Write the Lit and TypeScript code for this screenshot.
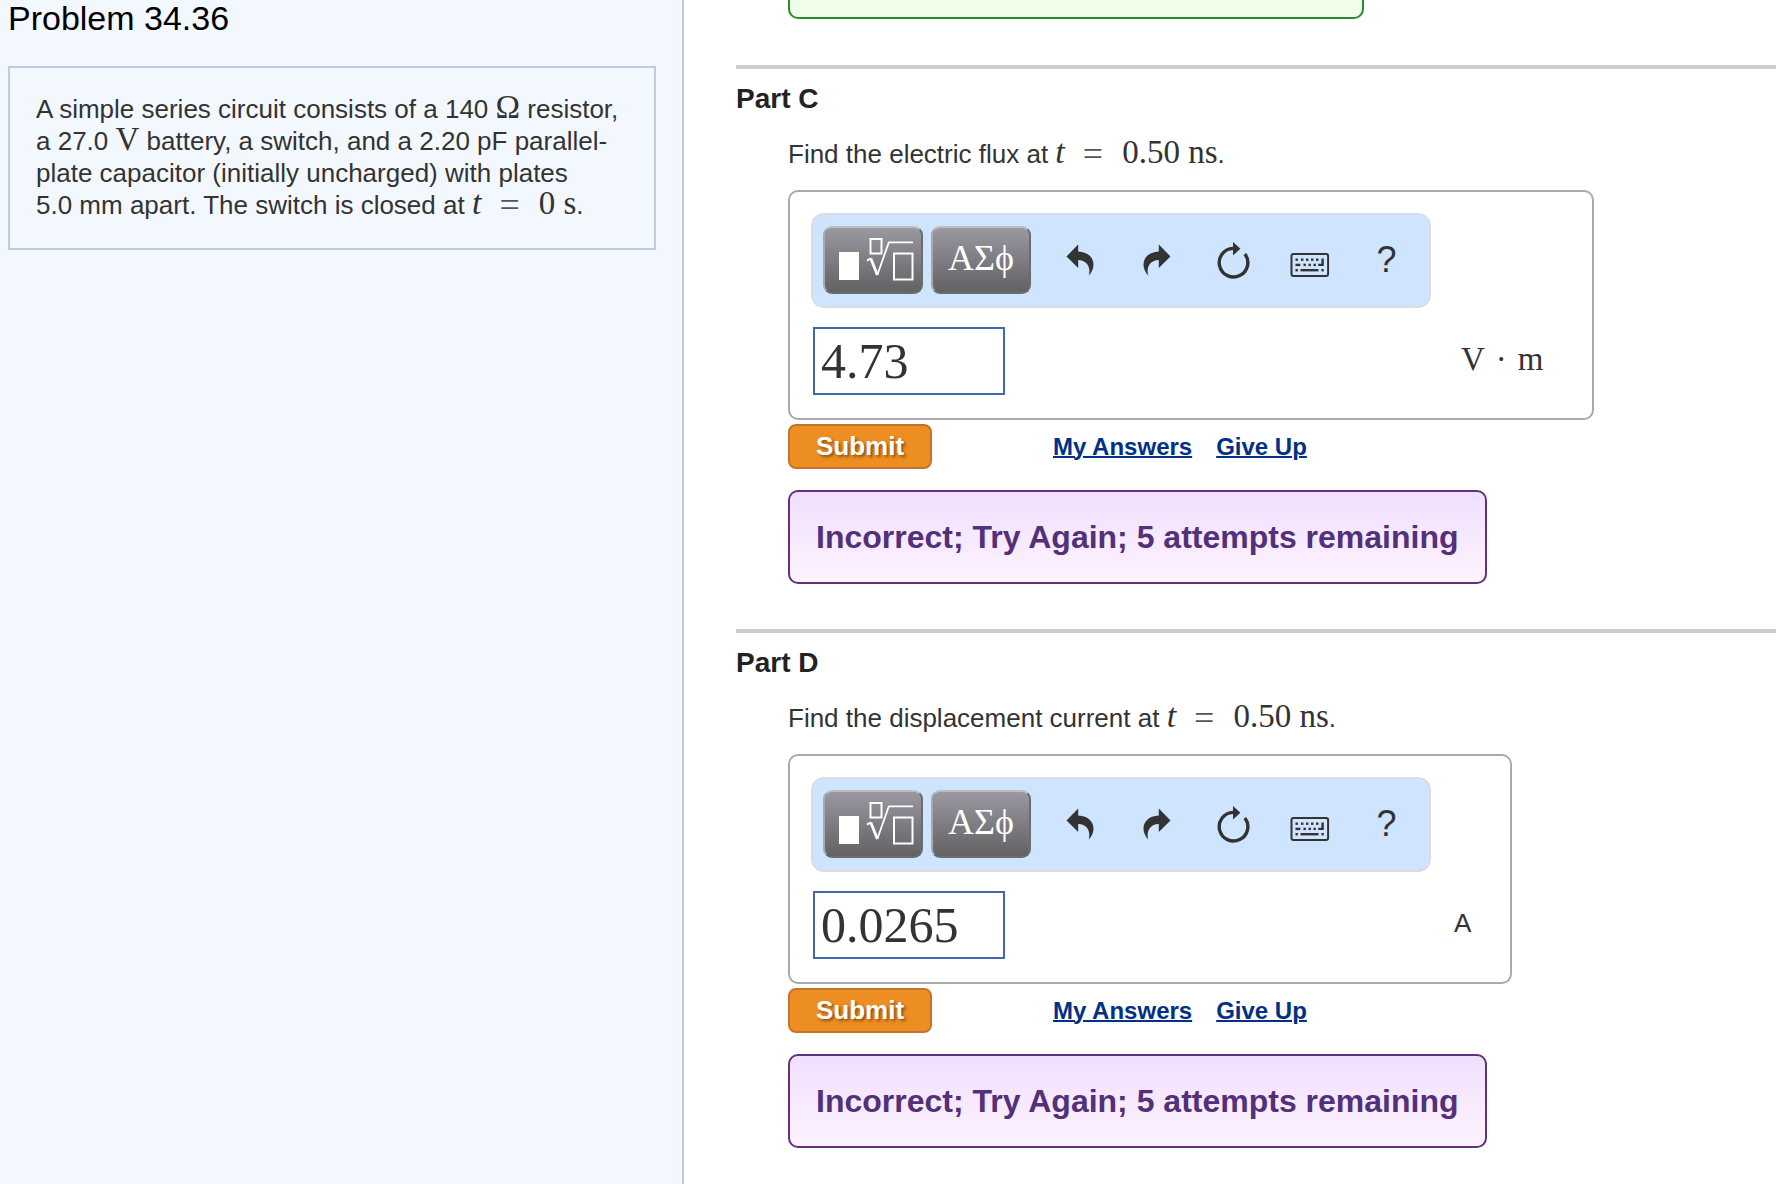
import { LitElement, html, css, svg, nothing } from "lit";
import { customElement, property } from "lit/decorators.js";

const sharedMath = css`
  .math {
    font-family: "Liberation Serif", "Times New Roman", serif;
    font-size: 33px;
    line-height: 24px;
    white-space: nowrap;
  }
  .var {
    font-size: 34px;
    font-style: italic;
  }
  .rel {
    margin: 0 19px 0 18px;
    color: #555;
    font-size: 36px;
    line-height: 0;
    vertical-align: -3px;
  }
`;

const equation = (value: string, unit: string) => html`<span class="math"
  ><span class="var">t</span><span class="rel">=</span>${value}&nbsp;${unit}</span
>`;

const rootIcon = svg`
  <rect x="14" y="24" width="20" height="28" fill="#fff" />
  <g fill="none" stroke="#fff" stroke-width="2">
    <rect x="45.5" y="11" width="11" height="14.5" />
    <rect x="69" y="25.5" width="18.5" height="26" />
    <path d="M42 32.6 45.8 30.4" />
    <path d="M52.3 47 63.8 14.4H88" stroke-width="1.8" />
    <path d="M45.8 30.4 52.4 47" stroke-width="2.8" />
  </g>`;

const undoPath =
  "M7.5 16.5 19.2 4.5V11.5C29.5 12 34.5 18 34.5 24.5 34.5 29 32.5 32.5 29.8 35.5 32 27.5 28 20 19.2 20V28Z";

const icons = {
  undo: svg`<path fill="#333" d=${undoPath} />`,
  redo: svg`<path fill="#333" transform="matrix(-1 0 0 1 42 0)" d=${undoPath} />`,
  reset: svg`
    <path fill="none" stroke="#333" stroke-width="3.4" d="M31.9 14A14.3 14.3 0 1 1 20 8.4" />
    <path fill="#333" d="M20 2 27.4 8.8 20 15.4Z" />`,
  keyboard: svg`
    <rect x="1.5" y="14" width="36.6" height="22" rx="2" fill="none" stroke="#333" stroke-width="2" />
    <g fill="#333">
      <rect x="5.5" y="18.5" width="2.4" height="2.4" />
      <rect x="11" y="18.5" width="2.4" height="2.4" />
      <rect x="16" y="18.5" width="2.4" height="2.4" />
      <rect x="21" y="18.5" width="2.4" height="2.4" />
      <rect x="26" y="18.5" width="2.4" height="2.4" />
      <path d="M31.4 18.5H33.8V26.1H28.2V23.7H31.4Z" />
      <rect x="5.5" y="23.7" width="4.8" height="2.4" />
      <rect x="13.5" y="23.7" width="2.4" height="2.4" />
      <rect x="18.5" y="23.7" width="2.4" height="2.4" />
      <rect x="23.5" y="23.7" width="2.4" height="2.4" />
      <rect x="5.5" y="29" width="2.4" height="2.4" />
      <rect x="10.5" y="29" width="18" height="2.4" />
      <rect x="31.4" y="29" width="2.4" height="2.4" />
    </g>`,
};

@customElement("math-toolbar")
class MathToolbar extends LitElement {
  static styles = css`
    :host {
      display: block;
    }
    .bar {
      display: flex;
      align-items: center;
      padding: 11px 4px 12px 10px;
      border: 2px solid #dadce3;
      border-radius: 13px;
      background: #cfe5ff;
    }
    .palettes {
      display: flex;
      gap: 8px;
      margin-right: 9px;
    }
    button {
      font: inherit;
      margin: 0;
      padding: 0;
      cursor: pointer;
    }
    .palette {
      display: flex;
      align-items: flex-start;
      justify-content: center;
      width: 100px;
      height: 68px;
      border: 2px solid;
      border-color: #bdbdbf #6c6c6e #6c6c6e #a9a9ab;
      border-radius: 9px;
      background: linear-gradient(#9a98a2, #626163);
      color: #fff;
      font-family: "Liberation Serif", serif;
      font-size: 36px;
      line-height: 60px;
    }
    .root {
      width: 96px;
      height: 64px;
    }
    .tool {
      display: flex;
      align-items: center;
      justify-content: center;
      width: 77px;
      height: 68px;
      border: 0;
      background: none;
      color: #333;
      font-family: "Liberation Sans", Arial, sans-serif;
      font-size: 36px;
    }
    .glyph {
      width: 40px;
      height: 40px;
    }
  `;

  private tool(name: keyof typeof icons, label: string) {
    return html`<button class="tool" type="button" aria-label=${label}>
      <svg class="glyph" viewBox="0 0 40 40" aria-hidden="true">${icons[name]}</svg>
    </button>`;
  }

  render() {
    return html`<div class="bar" role="toolbar">
      <div class="palettes">
        <button class="palette" type="button" aria-label="Templates">
          <svg class="root" viewBox="0 0 96 64" aria-hidden="true">${rootIcon}</svg>
        </button>
        <button class="palette" type="button">ΑΣϕ</button>
      </div>
      ${this.tool("undo", "Undo")} ${this.tool("redo", "Redo")} ${this.tool("reset", "Reset")}
      ${this.tool("keyboard", "Keyboard shortcuts")}
      <button class="tool" type="button">?</button>
    </div>`;
  }
}

@customElement("problem-part")
class ProblemPart extends LitElement {
  @property() name = "";
  @property() quantity = "";
  @property() answer = "";
  @property({ attribute: false }) unit: unknown = nothing;

  static styles = [
    sharedMath,
    css`
      :host {
        display: block;
        border-top: 4px solid #ccc;
        padding: 14px 0 45px;
      }
      .name {
        margin: 0 0 23px;
        font-size: 28px;
        line-height: 32px;
        color: #222;
      }
      .body {
        display: flex;
        flex-direction: column;
        align-items: flex-start;
        padding-left: 52px;
      }
      .prompt {
        margin: 0 0 20px;
        line-height: 32px;
      }
      .panel {
        display: grid;
        grid-template-columns: auto auto;
        column-gap: 23px;
        row-gap: 19px;
        padding: 21px 39px 23px 21px;
        border: 2px solid #aaa;
        border-radius: 10px;
      }
      .tools {
        grid-column: 1;
      }
      .answer {
        grid-column: 1;
        box-sizing: border-box;
        width: 192px;
        height: 68px;
        margin: 0 2px;
        padding: 0 6px;
        border: 2px solid #4267ab;
        border-radius: 0;
        outline: none;
        background: #fff;
        color: #333;
        font-family: "Liberation Serif", "Times New Roman", serif;
        font-size: 50px;
      }
      .unit {
        grid-column: 2;
        align-self: center;
        padding-bottom: 4px;
      }
      .product {
        display: flex;
        align-items: center;
        gap: 11px;
        padding: 0 9px 0 7px;
        line-height: 32px;
      }
      .actions {
        display: flex;
        align-items: center;
        gap: 24px;
        margin: 4px 0 21px;
      }
      .submit {
        width: 144px;
        height: 45px;
        margin: 0 97px 0 0;
        padding: 0;
        border: 2px solid #c4732f;
        border-radius: 8px;
        background: #ed8e22;
        color: #fff;
        font-family: inherit;
        font-size: 26px;
        font-weight: bold;
        text-shadow: 2px 2px 3px rgba(90, 40, 0, 0.6);
      }
      .link {
        color: #003087;
        font-size: 24px;
        font-weight: bold;
        text-decoration-thickness: 2px;
      }
      .feedback {
        padding: 0 26px;
        border: 2px solid #63307b;
        border-radius: 10px;
        background: linear-gradient(#f0dffe, #fef3ff);
        color: #53307a;
        font-size: 32px;
        font-weight: bold;
        line-height: 90px;
      }
    `,
  ];

  render() {
    return html`
      <h2 class="name">${this.name}</h2>
      <div class="body">
        <p class="prompt">
          <label for="answer">Find the ${this.quantity} at ${equation("0.50", "ns")}.</label>
        </p>
        <div class="panel">
          <math-toolbar class="tools"></math-toolbar>
          <input class="answer" id="answer" type="text" .value=${this.answer} />
          <span class="unit">${this.unit}</span>
        </div>
        <div class="actions">
          <button class="submit" type="button">Submit</button>
          <a class="link" href="#answers">My Answers</a>
          <a class="link" href="#give-up">Give Up</a>
        </div>
        <div class="feedback" role="status">Incorrect; Try Again; 5 attempts remaining</div>
      </div>
    `;
  }
}

@customElement("app-root")
class AppRoot extends LitElement {
  static styles = [
    sharedMath,
    css`
      :host {
        display: grid;
        grid-template-columns: 684px minmax(0, 1fr);
        height: 100vh;
        overflow: hidden;
        background: #fff;
        color: #333;
        font-family: "Liberation Sans", Arial, Helvetica, sans-serif;
        font-size: 26px;
      }
      .side {
        padding: 0 26px 0 8px;
        border-right: 2px solid #bccbdf;
        background: #f3f8ff;
      }
      .title {
        margin: 0 0 30px;
        color: #000;
        font-size: 34px;
        font-weight: normal;
        line-height: 36px;
      }
      .statement {
        margin: 0;
        padding: 25px 24px 27px 26px;
        border: 2px solid #bccbdf;
        line-height: 32px;
      }
      .parts {
        padding-left: 52px;
        overflow: hidden;
      }
      .correct {
        box-sizing: border-box;
        width: 576px;
        height: 19px;
        margin: 0 0 46px 52px;
        border: 2px solid #2c8a2c;
        border-top: 0;
        border-radius: 0 0 10px 10px;
        background: #f0fde8;
      }
    `,
  ];

  render() {
    return html`
      <aside class="side">
        <h1 class="title">Problem 34.36</h1>
        <p class="statement">
          A simple series circuit consists of a 140 <span class="math">Ω</span> resistor, a 27.0
          <span class="math">V</span> battery, a switch, and a 2.20 pF parallel-plate capacitor
          (initially uncharged) with plates 5.0&nbsp;mm apart. The switch is closed at
          ${equation("0", "s")}.
        </p>
      </aside>
      <main class="parts">
        <div class="correct"></div>
        <problem-part
          name="Part C"
          quantity="electric flux"
          answer="4.73"
          .unit=${html`<span class="math product"><span>V</span><span>·</span><span>m</span></span>`}
        ></problem-part>
        <problem-part
          name="Part D"
          quantity="displacement current"
          answer="0.0265"
          .unit=${"A"}
        ></problem-part>
      </main>
    `;
  }
}
